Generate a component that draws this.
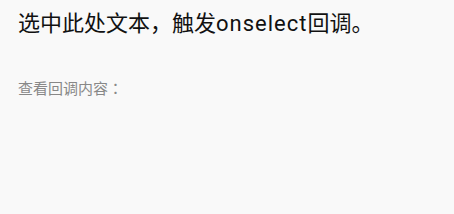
export default function App() {
  return (
    <div className="w-[454px] h-[214px] bg-[#f9f9f9] px-[18px] pt-[9px]" style={{ fontFamily: 'Roboto, "Noto Sans CJK SC", sans-serif' }}>
      <div className="text-[22px] leading-[30px] text-[#111]">选中此处文本，触发<span className="tracking-[1px]">onselect</span>回调。</div>
      <div className="mt-[39px] text-[15px] leading-[20px] text-[#888]">查看回调内容<span style={{ fontFamily: '"Noto Sans CJK JP", sans-serif' }}>：</span></div>
    </div>
  );
}
